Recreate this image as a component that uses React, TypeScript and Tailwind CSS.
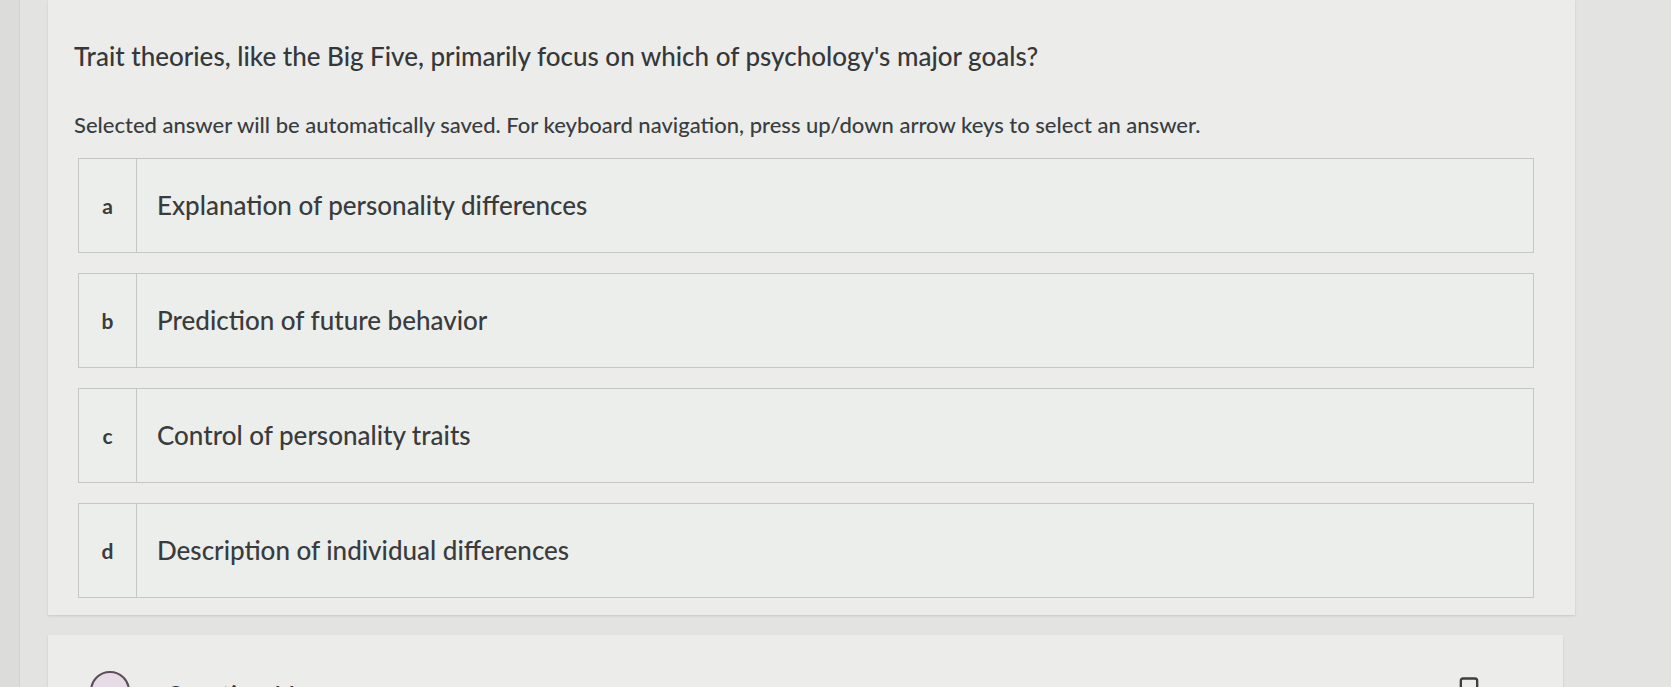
import { Bookmark } from 'lucide-react';

const options = [
  { key: 'a', text: 'Explanation of personality differences' },
  { key: 'b', text: 'Prediction of future behavior' },
  { key: 'c', text: 'Control of personality traits' },
  { key: 'd', text: 'Description of individual differences' },
];

function OptionRow({ letter, text }: { letter: string; text: string }) {
  return (
    <div className="flex h-[95px] w-[1456px] border border-[#c4c7c6] bg-[#eceeec]">
      <div className="flex w-[58px] shrink-0 items-center justify-center border-r border-[#c4c7c6] text-[21px] font-bold text-[#3a3c3d]">
        {letter}
      </div>
      <div className="flex items-center pl-[20px] text-[26px] font-medium text-[#393b3c]">{text}</div>
    </div>
  );
}

export default function App() {
  return (
    <div
      className="flex h-[687px] w-full overflow-hidden bg-[#e3e4e2]"
      style={{ fontFamily: 'Lato, "Noto Sans", sans-serif' }}
    >
      {/* left edge of the frame */}
      <div className="w-[20px] shrink-0 border-r border-[#d2d3d1] bg-[#dcdddb]" />

      <main className="flex flex-col pl-[28px]">
        {/* question card */}
        <section className="w-[1527px] bg-[#ecedeb] pb-[17px] pl-[26px] pt-[40px] shadow-[0_1px_2px_rgba(0,0,0,0.12)]">
          <h1 className="text-[26px] font-medium leading-8 text-[#35383a]">
            Trait theories, like the Big Five, primarily focus on which of psychology's major goals?
          </h1>
          <p className="mt-[40px] text-[22px] font-medium leading-[26px] text-[#3a3d3f]">
            Selected answer will be automatically saved. For keyboard navigation, press up/down arrow keys to select an
            answer.
          </p>
          <div className="ml-[4px] mt-[20px] flex flex-col gap-5">
            {options.map((o) => (
              <OptionRow key={o.key} letter={o.key} text={o.text} />
            ))}
          </div>
        </section>

        {/* next question card */}
        <section className="mt-[20px] flex w-[1515px] items-start justify-between bg-[#ecedeb] pl-[42px] pr-[80px] pt-[36px] shadow-[0_1px_2px_rgba(0,0,0,0.12)]">
          <div className="flex items-start gap-[36px]">
            <div className="h-[40px] w-[40px] rounded-full border-2 border-[#5b4d5a] bg-[#e6dbe6]" />
            <span className="pt-[8px] text-[24px] font-semibold leading-8 text-[#35383a]">Question 11</span>
          </div>
          <Bookmark className="mt-[4px] h-[28px] w-[28px] text-[#3d3f40]" strokeWidth={2} />
        </section>
      </main>
    </div>
  );
}
